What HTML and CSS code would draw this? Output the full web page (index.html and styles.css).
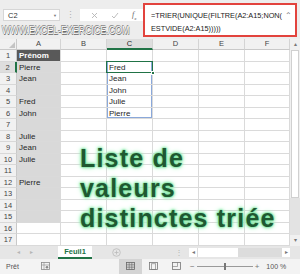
FILE: index.html
```html
<!DOCTYPE html>
<html lang="fr">
<head>
<meta charset="utf-8">
<title>Liste de valeurs distinctes triée</title>
<link rel="stylesheet" href="styles.css">
</head>
<body>
<div class="top">
  <div class="namebox"><span>C2</span><span class="caret">▼</span></div>
  <div class="dots">⋮</div>
  <div class="fxbar">
    <svg width="7" height="7" viewBox="0 0 7 7"><path d="M1 1L6 6M6 1L1 6" stroke="#b5b5b5" stroke-width="0.9" fill="none"/></svg>
    <svg width="8" height="7" viewBox="0 0 8 7"><path d="M1 4L3 6L7 1" stroke="#b5b5b5" stroke-width="0.9" fill="none"/></svg>
    <span class="fx">f<sub>x</sub></span>
  </div>
  <div class="formula">
    <div class="ftext">=TRIER(UNIQUE(FILTRE(A2:A15;NON(<br>ESTVIDE(A2:A15)))))</div>
    <span class="fcaret">⌃</span>
  </div>
  <div class="wm">WWW.EXCEL-EXERCICE.COM</div>
</div>

<div class="sheet">
  <div class="grid">
    <div class="corner"></div><div class="h">A</div><div class="h">B</div><div class="h hs">C</div><div class="h">D</div><div class="h">E</div><div class="h">F</div>

    <div class="rh">1</div><div class="c a1">Prénom</div><div class="c"></div><div class="c"></div><div class="c"></div><div class="c"></div><div class="c"></div>
    <div class="rh rhs">2</div><div class="c ga">Pierre</div><div class="c"></div><div class="c sp sel">Fred</div><div class="c"></div><div class="c"></div><div class="c"></div>
    <div class="rh">3</div><div class="c ga">Jean</div><div class="c"></div><div class="c sp">Jean</div><div class="c"></div><div class="c"></div><div class="c"></div>
    <div class="rh">4</div><div class="c ga"></div><div class="c"></div><div class="c sp">John</div><div class="c"></div><div class="c"></div><div class="c"></div>
    <div class="rh">5</div><div class="c ga">Fred</div><div class="c"></div><div class="c sp">Julie</div><div class="c"></div><div class="c"></div><div class="c"></div>
    <div class="rh">6</div><div class="c ga">John</div><div class="c"></div><div class="c sp spb">Pierre</div><div class="c"></div><div class="c"></div><div class="c"></div>
    <div class="rh">7</div><div class="c ga"></div><div class="c"></div><div class="c"></div><div class="c"></div><div class="c"></div><div class="c"></div>
    <div class="rh">8</div><div class="c ga">Julie</div><div class="c"></div><div class="c"></div><div class="c"></div><div class="c"></div><div class="c"></div>
    <div class="rh">9</div><div class="c ga">Jean</div><div class="c"></div><div class="c"></div><div class="c"></div><div class="c"></div><div class="c"></div>
    <div class="rh">10</div><div class="c ga">Julie</div><div class="c"></div><div class="c"></div><div class="c"></div><div class="c"></div><div class="c"></div>
    <div class="rh">11</div><div class="c ga"></div><div class="c"></div><div class="c"></div><div class="c"></div><div class="c"></div><div class="c"></div>
    <div class="rh">12</div><div class="c ga">Pierre</div><div class="c"></div><div class="c"></div><div class="c"></div><div class="c"></div><div class="c"></div>
    <div class="rh">13</div><div class="c ga"></div><div class="c"></div><div class="c"></div><div class="c"></div><div class="c"></div><div class="c"></div>
    <div class="rh">14</div><div class="c ga"></div><div class="c"></div><div class="c"></div><div class="c"></div><div class="c"></div><div class="c"></div>
    <div class="rh">15</div><div class="c ga"></div><div class="c"></div><div class="c"></div><div class="c"></div><div class="c"></div><div class="c"></div>
    <div class="rh">16</div><div class="c"></div><div class="c"></div><div class="c"></div><div class="c"></div><div class="c"></div><div class="c"></div>
    <div class="rh">17</div><div class="c"></div><div class="c"></div><div class="c"></div><div class="c"></div><div class="c"></div><div class="c"></div>
  </div>
  <div class="vscroll">
    <div class="varrow">▴</div>
    <div class="vthumb"></div>
    <div class="vtrack"></div>
    <div class="varrow">▾</div>
  </div>
  <div class="bigtext">Liste de<br>valeurs<br>distinctes triée</div>
</div>

<div class="tabs">
  <div class="nav"><span>◂</span><span>▸</span></div>
  <div class="tab">Feuil1</div>
  <div class="addtab">
    <svg width="9" height="9" viewBox="0 0 9 9"><circle cx="4.5" cy="4.5" r="3.8" stroke="#bbb" stroke-width="0.8" fill="none"/><path d="M4.5 2.5V6.5M2.5 4.5H6.5" stroke="#bbb" stroke-width="0.8"/></svg>
  </div>
  <div class="tdots">⋮</div>
  <div class="hscroll">
    <span class="harrow">◂</span>
    <div class="hthumb"></div>
    <div class="hgap"></div>
    <span class="harrow hright">▸</span>
  </div>
</div>

<div class="status">
  <span class="ready">Prêt</span>
  <svg class="macro" width="9" height="8" viewBox="0 0 9 8"><rect x="0.5" y="0.5" width="8" height="7" fill="none" stroke="#8a8a8a" stroke-width="0.8"/><path d="M0.5 3H8.5M3 0.5V7.5" stroke="#8a8a8a" stroke-width="0.6"/><circle cx="6" cy="5.3" r="1.3" fill="#8a8a8a"/></svg>
  <div class="views">
    <div class="view on"><svg width="9" height="8" viewBox="0 0 9 8"><rect x="0.5" y="0.5" width="8" height="7" fill="none" stroke="#666" stroke-width="0.8"/><path d="M0.5 2.8H8.5M0.5 5.2H8.5M3.2 0.5V7.5M5.8 0.5V7.5" stroke="#666" stroke-width="0.6"/></svg></div>
    <div class="view"><svg width="9" height="8" viewBox="0 0 9 8"><rect x="0.5" y="0.5" width="8" height="7" fill="none" stroke="#777" stroke-width="0.8"/><rect x="2.3" y="1.8" width="4.4" height="5.7" fill="none" stroke="#777" stroke-width="0.6"/></svg></div>
    <div class="view"><svg width="9" height="8" viewBox="0 0 9 8"><rect x="0.5" y="0.5" width="8" height="7" fill="none" stroke="#777" stroke-width="0.8"/><path d="M0.5 4.5H5.5V0.5" fill="none" stroke="#777" stroke-width="0.6"/></svg></div>
  </div>
  <div class="zoomctl">
    <span class="zm">−</span>
    <div class="slider"><div class="knob"></div></div>
    <span class="zm">+</span>
    <span class="pct">100 %</span>
  </div>
</div>
</body>
</html>
```
FILE: styles.css
```css
body {
  margin: 0;
  width: 300px;
  height: 274px;
  overflow: hidden;
  background: #ffffff;
  font-family: "Liberation Sans", Arial, sans-serif;
}

/* ---------- formula bar ---------- */
.top {
  position: relative;
  height: 39px;
  box-sizing: border-box;
  padding: 3px 3px 0 3px;
  display: flex;
  align-items: flex-start;
  background: #ededed;
}
.namebox {
  margin-top: 6px;
  width: 57px;
  height: 12px;
  box-sizing: border-box;
  background: #fff;
  border: 1px solid #d6d6d6;
  display: flex;
  justify-content: space-between;
  align-items: center;
  padding: 0 2px 0 4px;
  font-size: 7.5px;
  color: #333;
}
.caret { font-size: 4px; color: #777; }
.dots {
  width: 20px;
  margin-top: 6px;
  text-align: center;
  font-size: 9px;
  line-height: 12px;
  color: #b0b0b0;
}
.fxbar {
  margin-top: 6px;
  width: 63px;
  height: 12px;
  background: #fff;
  display: flex;
  align-items: center;
  justify-content: space-around;
  padding-left: 4px;
  box-sizing: border-box;
}
.fx {
  font-family: "Liberation Serif", serif;
  font-style: italic;
  font-size: 8px;
  color: #666;
}
.fx sub { font-size: 5px; }
.formula {
  flex: 1;
  height: 34px;
  box-sizing: border-box;
  border: 2px solid #e2433d;
  background: #fff;
  display: flex;
  justify-content: space-between;
  padding: 3.5px 3px 0 6px;
}
.ftext {
  font-size: 7.3px;
  line-height: 13px;
  color: #222;
  white-space: nowrap;
}
.fcaret {
  font-size: 8px;
  line-height: 14px;
  color: #777;
}
.wm {
  position: absolute;
  left: 2px;
  top: 24px;
  font-size: 11.5px;
  line-height: 13px;
  color: #ffffff;
  white-space: nowrap;
  transform: scaleX(0.77);
  transform-origin: left top;
  text-shadow: -0.6px -0.6px 0 #8c8c8c, 0.6px 0.6px 0 #6a6a6a, 0 0 1px #555;
}

/* ---------- sheet ---------- */
.sheet {
  position: relative;
  display: flex;
  height: 206.5px;
}
.grid {
  display: grid;
  grid-template-columns: 17px 44px 46px 46px 46px 46px 45px;
  grid-template-rows: 11px repeat(17, 11.5px);
}
.grid > div {
  box-sizing: border-box;
  border-right: 1px solid #dadada;
  border-bottom: 1px solid #dadada;
  white-space: nowrap;
  overflow: hidden;
}
.corner {
  background: #f1f1f1;
  position: relative;
  border-bottom-color: #c9c9c9 !important;
  border-right-color: #c9c9c9 !important;
}
.corner::after {
  content: "";
  position: absolute;
  right: 1px;
  bottom: 1px;
  border-left: 6px solid transparent;
  border-bottom: 6px solid #c4c4c4;
}
.h {
  background: #f1f1f1;
  text-align: center;
  font-size: 7.5px;
  line-height: 10px;
  color: #444;
  border-bottom-color: #c9c9c9 !important;
  border-right-color: #d4d4d4 !important;
}
.hs {
  background: #dedede;
  border-bottom: 2px solid #217346 !important;
  color: #222;
}
.rh {
  background: #f1f1f1;
  text-align: center;
  font-size: 7.5px;
  line-height: 11px;
  color: #444;
  border-right-color: #c9c9c9 !important;
  border-bottom-color: #d8d8d8 !important;
}
.rhs {
  background: #dedede;
  border-right: 2px solid #217346 !important;
}
.c {
  font-size: 8px;
  line-height: 11px;
  color: #262626;
  padding-left: 2px;
}
.ga { background: #d9d9d9; }
.a1 {
  background: #595959;
  color: #fff;
  font-weight: bold;
}
.sp {
  box-shadow: inset 1px 0 #8aa8da, inset -1px 0 #8aa8da;
}
.spb {
  box-shadow: inset 1px 0 #8aa8da, inset -1px 0 #8aa8da, inset 0 -1px #8aa8da;
}
.grid > .sel {
  position: relative;
  overflow: visible;
}
.sel::after {
  content: "";
  position: absolute;
  left: -1px;
  top: -1px;
  right: -1px;
  bottom: -1px;
  border: 1.5px solid #217346;
}
.sel::before {
  content: "";
  position: absolute;
  right: -3px;
  bottom: -3px;
  width: 4px;
  height: 4px;
  background: #217346;
  border: 1px solid #fff;
  box-sizing: border-box;
  z-index: 2;
}
.vscroll {
  width: 10px;
  display: flex;
  flex-direction: column;
  background: #f0f0f0;
}
.varrow {
  height: 11px;
  text-align: center;
  font-size: 6px;
  line-height: 11px;
  color: #777;
}
.vthumb {
  height: 148px;
  margin: 0 1px;
  background: #fff;
  border: 1px solid #d0d0d0;
  box-sizing: border-box;
}
.vtrack {
  flex: 1;
  background: #e3e3e3;
}
.bigtext {
  position: absolute;
  left: 80px;
  top: 104px;
  font-size: 25px;
  line-height: 30px;
  font-weight: bold;
  letter-spacing: 1.2px;
  color: #1f5831;
  white-space: nowrap;
  text-shadow: 0 0 1px #7fe8a2, 0 0 2px #6fdc95, 0 0 3px #7ee6a4, 0 0 4px #9af0b8, 0 0 6px #c0f7d3;
}

/* ---------- sheet tabs ---------- */
.tabs {
  display: flex;
  height: 13px;
  background: #e6e6e6;
  align-items: stretch;
}
.nav {
  width: 58px;
  display: flex;
  justify-content: center;
  gap: 10px;
  font-size: 6px;
  line-height: 13px;
  color: #b5b5b5;
  padding-right: 8px;
  box-sizing: border-box;
}
.tab {
  width: 34px;
  background: #fff;
  border-bottom: 2px solid #217346;
  box-sizing: border-box;
  text-align: center;
  font-size: 7.5px;
  line-height: 12px;
  font-weight: bold;
  color: #217346;
}
.addtab {
  width: 48px;
  display: flex;
  align-items: center;
  justify-content: center;
}
.tdots {
  width: 49px;
  text-align: right;
  font-size: 8px;
  line-height: 13px;
  color: #b5b5b5;
  padding-right: 6px;
  box-sizing: border-box;
}
.hscroll {
  flex: 1;
  margin: 2px 10px 2px 0;
  display: flex;
  align-items: stretch;
  background: #dcdcdc;
}
.harrow {
  width: 8px;
  font-size: 6px;
  line-height: 9px;
  text-align: center;
  color: #777;
  background: #fff;
}
.hthumb {
  width: 40px;
  margin-left: 1px;
  background: #fff;
}
.hgap { flex: 1; }

/* ---------- status bar ---------- */
.status {
  height: 15.5px;
  background: #f3f3f3;
  display: flex;
  align-items: stretch;
  font-size: 7px;
  color: #555;
  white-space: nowrap;
}
.ready {
  line-height: 15px;
  padding-left: 6px;
  width: 35px;
  flex-shrink: 0;
  box-sizing: border-box;
}
.macro {
  align-self: center;
  margin-left: 6px;
  flex-shrink: 0;
}
.views {
  margin-left: 69px;
  display: flex;
  flex-shrink: 0;
}
.view {
  width: 23px;
  display: flex;
  align-items: center;
  justify-content: center;
}
.view.on { background: #d4d4d4; }
.zoomctl {
  margin-left: 2px;
  display: flex;
  align-items: center;
  gap: 2px;
  flex-shrink: 0;
}
.zm {
  font-size: 8px;
  color: #777;
}
.slider {
  width: 56px;
  height: 1px;
  background: #9a9a9a;
  display: flex;
  justify-content: center;
  align-items: center;
}
.knob {
  width: 2px;
  height: 7px;
  background: #777;
}
.pct {
  margin-left: 5px;
  font-size: 7px;
  color: #555;
}
```
